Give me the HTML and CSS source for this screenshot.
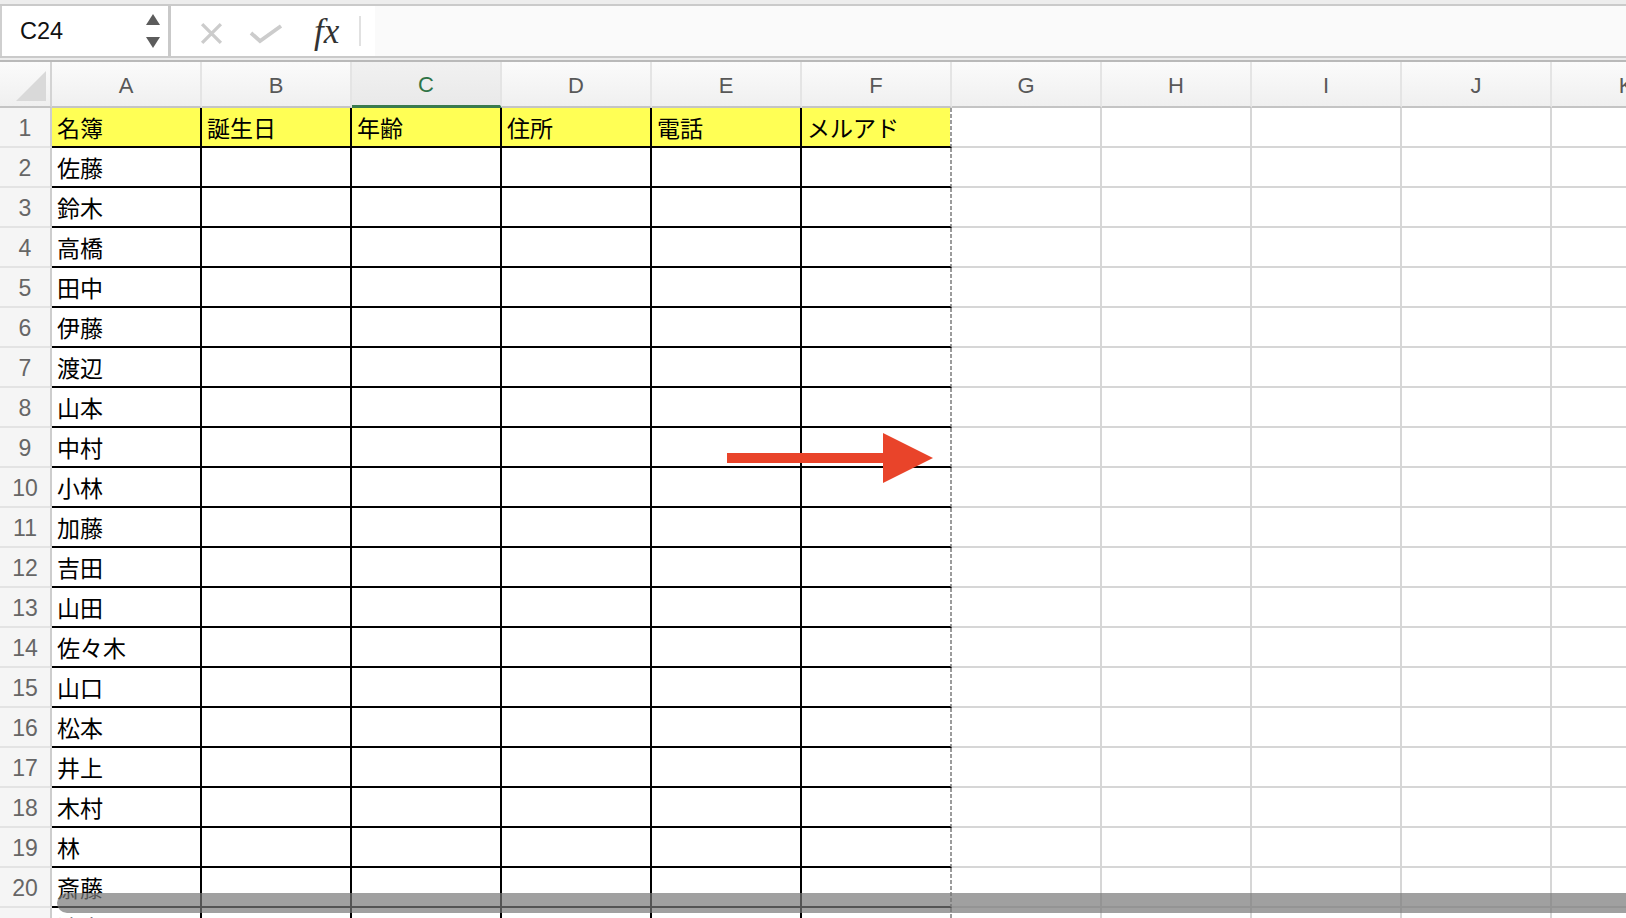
FILE: index.html
```html
<!DOCTYPE html>
<html lang="ja">
<head>
<meta charset="utf-8">
<title>Sheet</title>
<link rel="stylesheet" href="styles.css">
</head>
<body>
<div class="app">
  <div class="toolbar">
    <div class="bar">
      <div class="namebox">
        <span class="ref">C24</span>
        <svg class="spin" viewBox="0 0 14 34"><polygon points="0,11 14,11 7,0"/><polygon points="0,23 14,23 7,34"/></svg>
      </div>
      <div class="tools">
        <svg class="tool-x" viewBox="0 0 24 24"><path d="M3 3 L21 21 M21 3 L3 21"/></svg>
        <svg class="tool-ok" viewBox="0 0 36 22"><path d="M3 10 L12 18 L33 3"/></svg>
        <span class="fx">fx</span>
        <span class="sep"></span>
      </div>
      <div class="input"></div>
    </div>
  </div>

  <div class="sheet">
    <div class="colhead">
      <div class="corner"><svg class="corner-tri" viewBox="0 0 30 30"><polygon points="0,30 30,30 30,0"/></svg></div>
      <div class="ch">A</div><div class="ch">B</div><div class="ch sel">C</div><div class="ch">D</div><div class="ch">E</div><div class="ch">F</div><div class="ch">G</div><div class="ch">H</div><div class="ch">I</div><div class="ch">J</div><div class="ch">K</div>
    </div>

    <div class="row hdr"><div class="rh">1</div><div class="c k">名簿</div><div class="c k">誕生日</div><div class="c k">年齢</div><div class="c k">住所</div><div class="c k">電話</div><div class="c k f">メルアド</div><div class="c"></div><div class="c"></div><div class="c"></div><div class="c"></div><div class="c"></div></div>
    <div class="row"><div class="rh">2</div><div class="c k">佐藤</div><div class="c k"></div><div class="c k"></div><div class="c k"></div><div class="c k"></div><div class="c k f"></div><div class="c"></div><div class="c"></div><div class="c"></div><div class="c"></div><div class="c"></div></div>
    <div class="row"><div class="rh">3</div><div class="c k">鈴木</div><div class="c k"></div><div class="c k"></div><div class="c k"></div><div class="c k"></div><div class="c k f"></div><div class="c"></div><div class="c"></div><div class="c"></div><div class="c"></div><div class="c"></div></div>
    <div class="row"><div class="rh">4</div><div class="c k">高橋</div><div class="c k"></div><div class="c k"></div><div class="c k"></div><div class="c k"></div><div class="c k f"></div><div class="c"></div><div class="c"></div><div class="c"></div><div class="c"></div><div class="c"></div></div>
    <div class="row"><div class="rh">5</div><div class="c k">田中</div><div class="c k"></div><div class="c k"></div><div class="c k"></div><div class="c k"></div><div class="c k f"></div><div class="c"></div><div class="c"></div><div class="c"></div><div class="c"></div><div class="c"></div></div>
    <div class="row"><div class="rh">6</div><div class="c k">伊藤</div><div class="c k"></div><div class="c k"></div><div class="c k"></div><div class="c k"></div><div class="c k f"></div><div class="c"></div><div class="c"></div><div class="c"></div><div class="c"></div><div class="c"></div></div>
    <div class="row"><div class="rh">7</div><div class="c k">渡辺</div><div class="c k"></div><div class="c k"></div><div class="c k"></div><div class="c k"></div><div class="c k f"></div><div class="c"></div><div class="c"></div><div class="c"></div><div class="c"></div><div class="c"></div></div>
    <div class="row"><div class="rh">8</div><div class="c k">山本</div><div class="c k"></div><div class="c k"></div><div class="c k"></div><div class="c k"></div><div class="c k f"></div><div class="c"></div><div class="c"></div><div class="c"></div><div class="c"></div><div class="c"></div></div>
    <div class="row"><div class="rh">9</div><div class="c k">中村</div><div class="c k"></div><div class="c k"></div><div class="c k"></div><div class="c k"></div><div class="c k f"></div><div class="c"></div><div class="c"></div><div class="c"></div><div class="c"></div><div class="c"></div></div>
    <div class="row"><div class="rh">10</div><div class="c k">小林</div><div class="c k"></div><div class="c k"></div><div class="c k"></div><div class="c k"></div><div class="c k f"></div><div class="c"></div><div class="c"></div><div class="c"></div><div class="c"></div><div class="c"></div></div>
    <div class="row"><div class="rh">11</div><div class="c k">加藤</div><div class="c k"></div><div class="c k"></div><div class="c k"></div><div class="c k"></div><div class="c k f"></div><div class="c"></div><div class="c"></div><div class="c"></div><div class="c"></div><div class="c"></div></div>
    <div class="row"><div class="rh">12</div><div class="c k">吉田</div><div class="c k"></div><div class="c k"></div><div class="c k"></div><div class="c k"></div><div class="c k f"></div><div class="c"></div><div class="c"></div><div class="c"></div><div class="c"></div><div class="c"></div></div>
    <div class="row"><div class="rh">13</div><div class="c k">山田</div><div class="c k"></div><div class="c k"></div><div class="c k"></div><div class="c k"></div><div class="c k f"></div><div class="c"></div><div class="c"></div><div class="c"></div><div class="c"></div><div class="c"></div></div>
    <div class="row"><div class="rh">14</div><div class="c k">佐々木</div><div class="c k"></div><div class="c k"></div><div class="c k"></div><div class="c k"></div><div class="c k f"></div><div class="c"></div><div class="c"></div><div class="c"></div><div class="c"></div><div class="c"></div></div>
    <div class="row"><div class="rh">15</div><div class="c k">山口</div><div class="c k"></div><div class="c k"></div><div class="c k"></div><div class="c k"></div><div class="c k f"></div><div class="c"></div><div class="c"></div><div class="c"></div><div class="c"></div><div class="c"></div></div>
    <div class="row"><div class="rh">16</div><div class="c k">松本</div><div class="c k"></div><div class="c k"></div><div class="c k"></div><div class="c k"></div><div class="c k f"></div><div class="c"></div><div class="c"></div><div class="c"></div><div class="c"></div><div class="c"></div></div>
    <div class="row"><div class="rh">17</div><div class="c k">井上</div><div class="c k"></div><div class="c k"></div><div class="c k"></div><div class="c k"></div><div class="c k f"></div><div class="c"></div><div class="c"></div><div class="c"></div><div class="c"></div><div class="c"></div></div>
    <div class="row"><div class="rh">18</div><div class="c k">木村</div><div class="c k"></div><div class="c k"></div><div class="c k"></div><div class="c k"></div><div class="c k f"></div><div class="c"></div><div class="c"></div><div class="c"></div><div class="c"></div><div class="c"></div></div>
    <div class="row"><div class="rh">19</div><div class="c k">林</div><div class="c k"></div><div class="c k"></div><div class="c k"></div><div class="c k"></div><div class="c k f"></div><div class="c"></div><div class="c"></div><div class="c"></div><div class="c"></div><div class="c"></div></div>
    <div class="row"><div class="rh">20</div><div class="c k">斎藤</div><div class="c k"></div><div class="c k"></div><div class="c k"></div><div class="c k"></div><div class="c k f"></div><div class="c"></div><div class="c"></div><div class="c"></div><div class="c"></div><div class="c"></div></div>
    <div class="row"><div class="rh">21</div><div class="c k">清水</div><div class="c k"></div><div class="c k"></div><div class="c k"></div><div class="c k"></div><div class="c k f"></div><div class="c"></div><div class="c"></div><div class="c"></div><div class="c"></div><div class="c"></div></div>
  </div>

  <svg class="arrow" viewBox="0 0 212 56"><rect x="2" y="23" width="160" height="10"/><polygon points="158,3 208,28 158,53"/></svg>
  <div class="hscroll"></div>
</div>
</body>
</html>
```

FILE: styles.css
```css
* { box-sizing: border-box; }
html, body { margin: 0; padding: 0; }
body {
  background: #fff;
  font-family: "Liberation Sans", "Noto Sans CJK JP", sans-serif;
}
.app {
  position: relative;
  width: 1626px;
  height: 918px;
  overflow: hidden;
}

/* formula bar */
.toolbar {
  height: 62px;
  padding-top: 4px;
  background: #ededed;
  border-bottom: 2px solid #b9b9b9;
}
.bar {
  display: flex;
  height: 54px;
  background: #fff;
  border-top: 2px solid #cacaca;
  border-bottom: 2px solid #cacaca;
}
.namebox {
  flex: 0 0 171px;
  display: flex;
  align-items: center;
  justify-content: space-between;
  padding: 0 8px 0 18px;
  border-left: 2px solid #cfcfcf;
  border-right: 3px solid #c9c9c9;
  font-size: 23.5px;
  color: #111;
}
.spin { width: 14px; height: 34px; fill: #5c5c5c; }
.tools {
  display: flex;
  align-items: center;
  padding-left: 28px;
}
.tool-x {
  width: 25px; height: 25px;
  margin-top: 4px;
  fill: none; stroke: #cccccc; stroke-width: 3.2;
}
.tool-ok {
  width: 36px; height: 22px;
  margin-left: 24px; margin-top: 6px;
  fill: none; stroke: #cccccc; stroke-width: 3.8;
}
.fx {
  width: 32px;
  margin-left: 30px;
  margin-top: 2px;
  font-family: "Liberation Serif", "DejaVu Serif", serif;
  font-style: italic;
  font-size: 35px;
  color: #333;
}
.sep {
  width: 2px; height: 30px;
  margin-left: 13px;
  background: #e1e1e1;
}
.input {
  flex: 1;
  margin-left: 14px;
  background: #fafafa;
}

/* grid */
.sheet { width: 100%; }
.colhead {
  display: flex;
  height: 46px;
  background: linear-gradient(#fbfbfb, #efefef);
}
.corner {
  flex: 0 0 52px;
  display: flex;
  align-items: flex-end;
  justify-content: flex-end;
  padding: 0 4px 5px 0;
  border-right: 2px solid #d3d3d3;
  border-bottom: 2px solid #c4c4c4;
}
.corner-tri { width: 30px; height: 30px; fill: #d9d9d9; }
.ch {
  flex: 0 0 150px;
  display: flex;
  align-items: center;
  justify-content: center;
  padding-top: 3px;
  border-right: 2px solid #e4e4e4;
  border-bottom: 2px solid #c4c4c4;
  font-size: 22px;
  color: #585858;
}
.ch.sel {
  color: #2f7447;
  background: linear-gradient(#f1f1f1, #e9e9e9);
  border-bottom: 3px solid #3a7a4e;
}

.row { display: flex; height: 40px; }
.rh {
  flex: 0 0 52px;
  display: flex;
  align-items: center;
  justify-content: center;
  padding-top: 3px;
  border-right: 2px solid #cdcdcd;
  border-bottom: 2px solid #e3e3e3;
  background: #f5f5f5;
  font-size: 23px;
  color: #666;
}
.c {
  flex: 0 0 150px;
  display: flex;
  align-items: center;
  padding-left: 5px;
  border-right: 2px solid #d6d6d6;
  border-bottom: 2px solid #d6d6d6;
  font-family: "Noto Sans CJK JP", "Liberation Sans", sans-serif;
  font-size: 23px;
  color: #000;
  white-space: nowrap;
}
.c.k { border-color: #000; }
.hdr .c.k { background-color: #ffff55; }
.c.f {
  border-right-color: transparent;
  background-image: repeating-linear-gradient(to bottom, #9c9c9c 0 4px, #ffffff 4px 6px);
  background-size: 2px 100%;
  background-position: right top;
  background-repeat: no-repeat;
  background-origin: border-box;
}

/* overlays */
.arrow {
  position: absolute;
  left: 725px;
  top: 430px;
  width: 212px;
  height: 56px;
  fill: #e9442a;
}
.hscroll {
  position: absolute;
  left: 57px;
  right: -20px;
  top: 893px;
  height: 20px;
  border-radius: 10px;
  background: rgba(120, 120, 120, 0.7);
}
```
